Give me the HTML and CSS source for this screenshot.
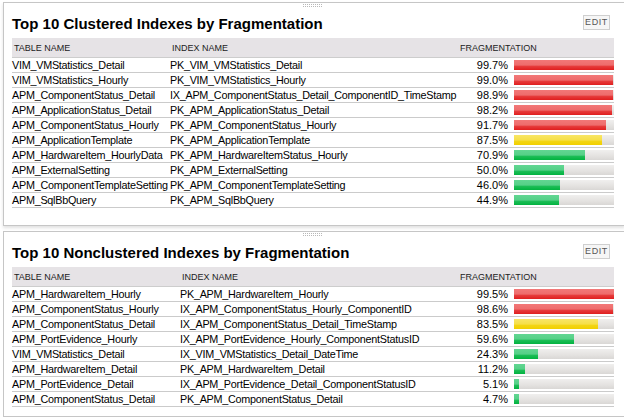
FILE: index.html
```html
<!DOCTYPE html>
<html>
<head>
<meta charset="utf-8">
<link rel="stylesheet" href="styles.css">
</head>
<body>
<div class="page">
  <section class="panel p1">
    <div class="handle"></div>
    <div class="titlebar">
      <h2 class="title">Top 10 Clustered Indexes by Fragmentation</h2>
      <span class="edit">EDIT</span>
    </div>
    <table class="grid t1">
      <colgroup><col class="c1"><col class="c2"><col class="c3"><col class="c4"></colgroup>
      <thead><tr><th>TABLE NAME</th><th>INDEX NAME</th><th colspan="2">FRAGMENTATION</th></tr></thead>
      <tbody>
        <tr><td>VIM_VMStatistics_Detail</td><td>PK_VIM_VMStatistics_Detail</td><td class="pct">99.7%</td><td class="barcell"><div class="track"><div class="fill red" style="width:99.7%"></div></div></td></tr>
        <tr><td>VIM_VMStatistics_Hourly</td><td>PK_VIM_VMStatistics_Hourly</td><td class="pct">99.0%</td><td class="barcell"><div class="track"><div class="fill red" style="width:99%"></div></div></td></tr>
        <tr><td>APM_ComponentStatus_Detail</td><td>IX_APM_ComponentStatus_Detail_ComponentID_TimeStamp</td><td class="pct">98.9%</td><td class="barcell"><div class="track"><div class="fill red" style="width:98.9%"></div></div></td></tr>
        <tr><td>APM_ApplicationStatus_Detail</td><td>PK_APM_ApplicationStatus_Detail</td><td class="pct">98.2%</td><td class="barcell"><div class="track"><div class="fill red" style="width:98.2%"></div></div></td></tr>
        <tr><td>APM_ComponentStatus_Hourly</td><td>PK_APM_ComponentStatus_Hourly</td><td class="pct">91.7%</td><td class="barcell"><div class="track"><div class="fill red" style="width:91.7%"></div></div></td></tr>
        <tr><td>APM_ApplicationTemplate</td><td>PK_APM_ApplicationTemplate</td><td class="pct">87.5%</td><td class="barcell"><div class="track"><div class="fill yellow" style="width:87.5%"></div></div></td></tr>
        <tr><td>APM_HardwareItem_HourlyData</td><td>PK_APM_HardwareItemStatus_Hourly</td><td class="pct">70.9%</td><td class="barcell"><div class="track"><div class="fill green" style="width:70.9%"></div></div></td></tr>
        <tr><td>APM_ExternalSetting</td><td>PK_APM_ExternalSetting</td><td class="pct">50.0%</td><td class="barcell"><div class="track"><div class="fill green" style="width:50%"></div></div></td></tr>
        <tr><td>APM_ComponentTemplateSetting</td><td>PK_APM_ComponentTemplateSetting</td><td class="pct">46.0%</td><td class="barcell"><div class="track"><div class="fill green" style="width:46%"></div></div></td></tr>
        <tr><td>APM_SqlBbQuery</td><td>PK_APM_SqlBbQuery</td><td class="pct">44.9%</td><td class="barcell"><div class="track"><div class="fill green" style="width:44.9%"></div></div></td></tr>
      </tbody>
    </table>
  </section>

  <section class="panel p2">
    <div class="handle"></div>
    <div class="titlebar">
      <h2 class="title">Top 10 Nonclustered Indexes by Fragmentation</h2>
      <span class="edit">EDIT</span>
    </div>
    <table class="grid t2">
      <colgroup><col class="c1"><col class="c2"><col class="c3"><col class="c4"></colgroup>
      <thead><tr><th>TABLE NAME</th><th>INDEX NAME</th><th colspan="2">FRAGMENTATION</th></tr></thead>
      <tbody>
        <tr><td>APM_HardwareItem_Hourly</td><td>PK_APM_HardwareItem_Hourly</td><td class="pct">99.5%</td><td class="barcell"><div class="track"><div class="fill red" style="width:99.5%"></div></div></td></tr>
        <tr><td>APM_ComponentStatus_Hourly</td><td>IX_APM_ComponentStatus_Hourly_ComponentID</td><td class="pct">98.6%</td><td class="barcell"><div class="track"><div class="fill red" style="width:98.6%"></div></div></td></tr>
        <tr><td>APM_ComponentStatus_Detail</td><td>IX_APM_ComponentStatus_Detail_TimeStamp</td><td class="pct">83.5%</td><td class="barcell"><div class="track"><div class="fill yellow" style="width:83.5%"></div></div></td></tr>
        <tr><td>APM_PortEvidence_Hourly</td><td>IX_APM_PortEvidence_Hourly_ComponentStatusID</td><td class="pct">59.6%</td><td class="barcell"><div class="track"><div class="fill green" style="width:59.6%"></div></div></td></tr>
        <tr><td>VIM_VMStatistics_Detail</td><td>IX_VIM_VMStatistics_Detail_DateTime</td><td class="pct">24.3%</td><td class="barcell"><div class="track"><div class="fill green" style="width:24.3%"></div></div></td></tr>
        <tr><td>APM_HardwareItem_Detail</td><td>PK_APM_HardwareItem_Detail</td><td class="pct">11.2%</td><td class="barcell"><div class="track"><div class="fill green" style="width:11.2%"></div></div></td></tr>
        <tr><td>APM_PortEvidence_Detail</td><td>IX_APM_PortEvidence_Detail_ComponentStatusID</td><td class="pct">5.1%</td><td class="barcell"><div class="track"><div class="fill green" style="width:5.1%"></div></div></td></tr>
        <tr><td>APM_ComponentStatus_Detail</td><td>PK_APM_ComponentStatus_Detail</td><td class="pct">4.7%</td><td class="barcell"><div class="track"><div class="fill green" style="width:4.7%"></div></div></td></tr>
      </tbody>
    </table>
  </section>
</div>
</body>
</html>
```
FILE: styles.css
```css
html, body {
  margin: 0;
  padding: 0;
  background: #ffffff;
  overflow: hidden;
}
body {
  font-family: "Liberation Sans", Arial, sans-serif;
  color: #000;
}
.page {
  padding: 2px 0 0 3px;
  width: 660px;
}
.panel {
  box-sizing: border-box;
  width: 622px;
  border: 1px solid #c6c6c6;
  background: #fff;
  padding: 0 10px 17px 8px;
}
.p1 {
  margin-bottom: 5px;
  box-shadow: 0 2px 3px rgba(0, 0, 0, 0.12);
}
.p2 {
  padding-bottom: 9px;
}
.handle {
  width: 20px;
  height: 3px;
  margin: 1px auto 0;
  background:
    linear-gradient(90deg, #b8b8b8 50%, transparent 50%) left top / 2px 1px repeat-x,
    linear-gradient(90deg, #b8b8b8 50%, transparent 50%) left bottom / 2px 1px repeat-x;
}
.titlebar {
  height: 31px;
  display: flex;
  align-items: center;
  justify-content: space-between;
}
.title {
  margin: 0;
  font-family: "Liberation Sans", Arial, sans-serif;
  font-weight: bold;
  font-size: 15px;
  line-height: 31px;
  padding-top: 1px;
  color: #000;
}
.edit {
  box-sizing: border-box;
  width: 27px;
  height: 15px;
  margin-right: 4px;
  margin-top: -1px;
  border: 1px solid #cfcfcf;
  background: #f6f6f6;
  color: #555;
  font-size: 9px;
  line-height: 13px;
  letter-spacing: 0.6px;
  text-align: center;
}
.grid {
  width: 602px;
  table-layout: fixed;
  border-collapse: collapse;
  border-spacing: 0;
}
.t1 .c1 { width: 158px; }
.t1 .c2 { width: 288px; }
.t2 .c1 { width: 168px; }
.t2 .c2 { width: 278px; }
.c3 { width: 50px; }
.c4 { width: 106px; }
.grid th {
  height: 19px;
  padding: 0 0 0 2px;
  background: #e6e3e6;
  border-bottom: 1px solid #cdcdcd;
  font-size: 9px;
  font-weight: normal;
  color: #222;
  text-align: left;
  white-space: nowrap;
}
.grid td {
  height: 14px;
  padding: 0;
  border-bottom: 1px solid #cbcbcb;
  font-size: 10.8px;
  line-height: 14px;
  letter-spacing: -0.25px;
  white-space: nowrap;
  overflow: visible;
}
.grid td.pct {
  text-align: right;
  font-size: 11px;
  letter-spacing: 0;
}
.grid td.barcell {
  padding-left: 6px;
  vertical-align: top;
}
.track {
  width: 100px;
  height: 10px;
  margin-top: 2px;
  background: linear-gradient(#f0efee, #e4e2e0 60%, #d9d7d5);
}
.fill {
  height: 10px;
}
.red {
  background: linear-gradient(#f27878, #ee6c6c 50%, #e63a3a 65%, #df1f1f);
}
.yellow {
  background: linear-gradient(#f8e666, #f6df48 50%, #f3d512 65%, #f1cf00);
}
.green {
  background: linear-gradient(#62d692, #55d087 50%, #1bbd55 65%, #02b240);
}
```
